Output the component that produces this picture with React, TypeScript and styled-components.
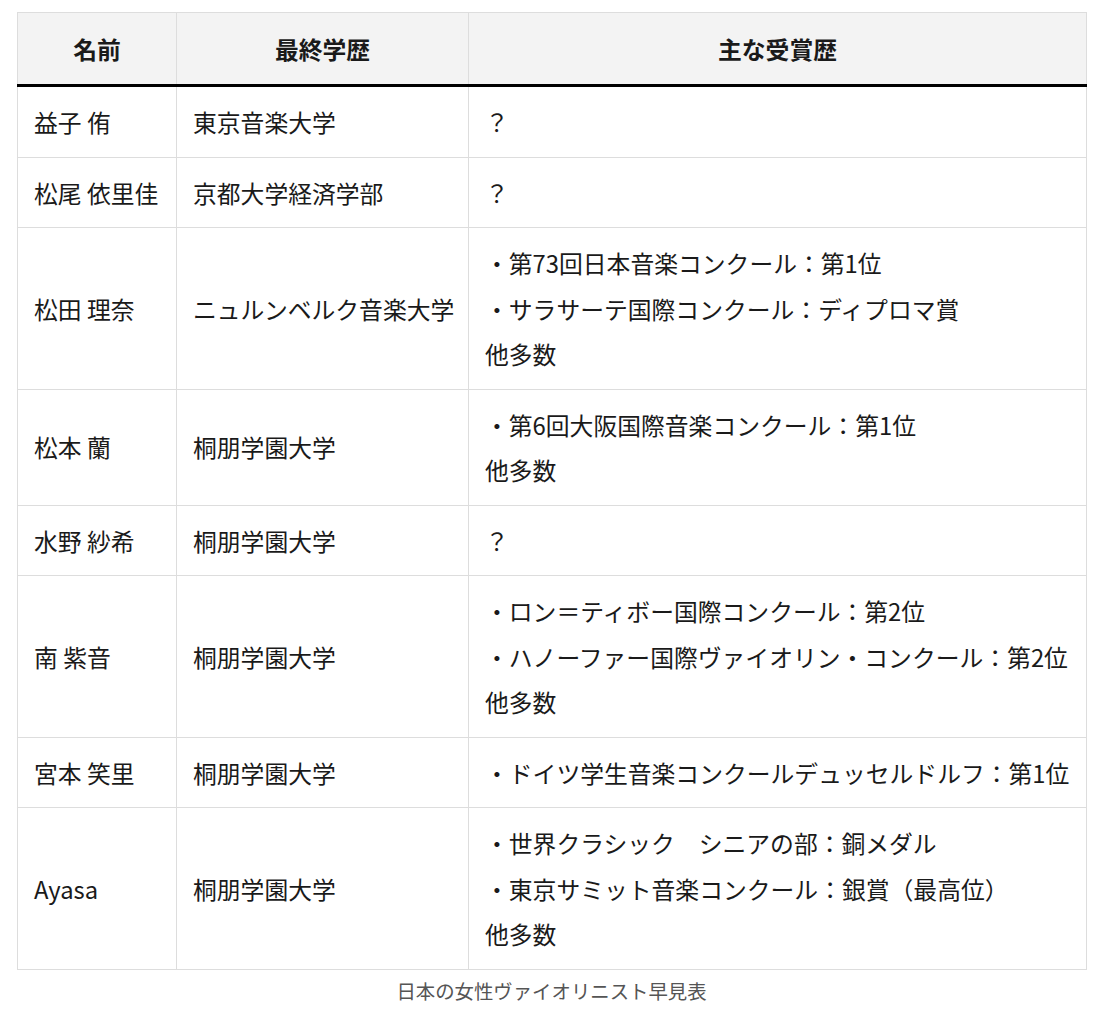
import React from "react";
import styled, { createGlobalStyle } from "styled-components";

const Global = createGlobalStyle`
  html, body { margin: 0; padding: 0; background: #fff; }
  body { font-family: "Noto Sans CJK JP", "Noto Sans", sans-serif; color: #1a1a1a; }
`;

const Page = styled.div`
  padding: 12px 0 0 17px;
`;

const Figure = styled.figure`
  margin: 0;
  width: 1069px;
`;

const Table = styled.table`
  width: 100%;
  border-collapse: collapse;
  table-layout: fixed;
  font-size: 23.8px;
`;

const HeadCell = styled.th<{ $w: number }>`
  width: ${(p) => p.$w}px;
  background: #f3f3f3;
  border: 1px solid #dddddd;
  border-bottom: 3px solid #000;
  height: 73px;
  padding: 0 16px;
  font-weight: 700;
  text-align: center;
  box-sizing: border-box;
  line-height: 1;
`;

const Cell = styled.td`
  border: 1px solid #dddddd;
  padding: 12px 16px 12px 16px;
  line-height: 45.5px;
  vertical-align: middle;
  white-space: nowrap;
`;

const Line = styled.div``;

const Caption = styled.figcaption`
  text-align: center;
  font-size: 19.4px;
  color: #555;
  padding-top: 7px;
  line-height: 28px;
`;

type Row = { name: string; school: string; awards: string[] };

const rows: Row[] = [
  { name: "益子 侑", school: "東京音楽大学", awards: ["？"] },
  { name: "松尾 依里佳", school: "京都大学経済学部", awards: ["？"] },
  {
    name: "松田 理奈",
    school: "ニュルンベルク音楽大学",
    awards: ["・第73回日本音楽コンクール：第1位", "・サラサーテ国際コンクール：ディプロマ賞", "他多数"],
  },
  { name: "松本 蘭", school: "桐朋学園大学", awards: ["・第6回大阪国際音楽コンクール：第1位", "他多数"] },
  { name: "水野 紗希", school: "桐朋学園大学", awards: ["？"] },
  {
    name: "南 紫音",
    school: "桐朋学園大学",
    awards: ["・ロン＝ティボー国際コンクール：第2位", "・ハノーファー国際ヴァイオリン・コンクール：第2位", "他多数"],
  },
  { name: "宮本 笑里", school: "桐朋学園大学", awards: ["・ドイツ学生音楽コンクールデュッセルドルフ：第1位"] },
  {
    name: "Ayasa",
    school: "桐朋学園大学",
    awards: ["・世界クラシック　シニアの部：銅メダル", "・東京サミット音楽コンクール：銀賞（最高位）", "他多数"],
  },
];

export default function App() {
  return (
    <>
      <Global />
      <Page>
        <Figure>
          <Table>
            <thead>
              <tr>
                <HeadCell $w={159}>名前</HeadCell>
                <HeadCell $w={292}>最終学歴</HeadCell>
                <HeadCell $w={618}>主な受賞歴</HeadCell>
              </tr>
            </thead>
            <tbody>
              {rows.map((r) => (
                <tr key={r.name}>
                  <Cell>{r.name}</Cell>
                  <Cell>{r.school}</Cell>
                  <Cell>
                    {r.awards.map((a, i) => (
                      <Line key={i}>{a}</Line>
                    ))}
                  </Cell>
                </tr>
              ))}
            </tbody>
          </Table>
          <Caption>日本の女性ヴァイオリニスト早見表</Caption>
        </Figure>
      </Page>
    </>
  );
}
